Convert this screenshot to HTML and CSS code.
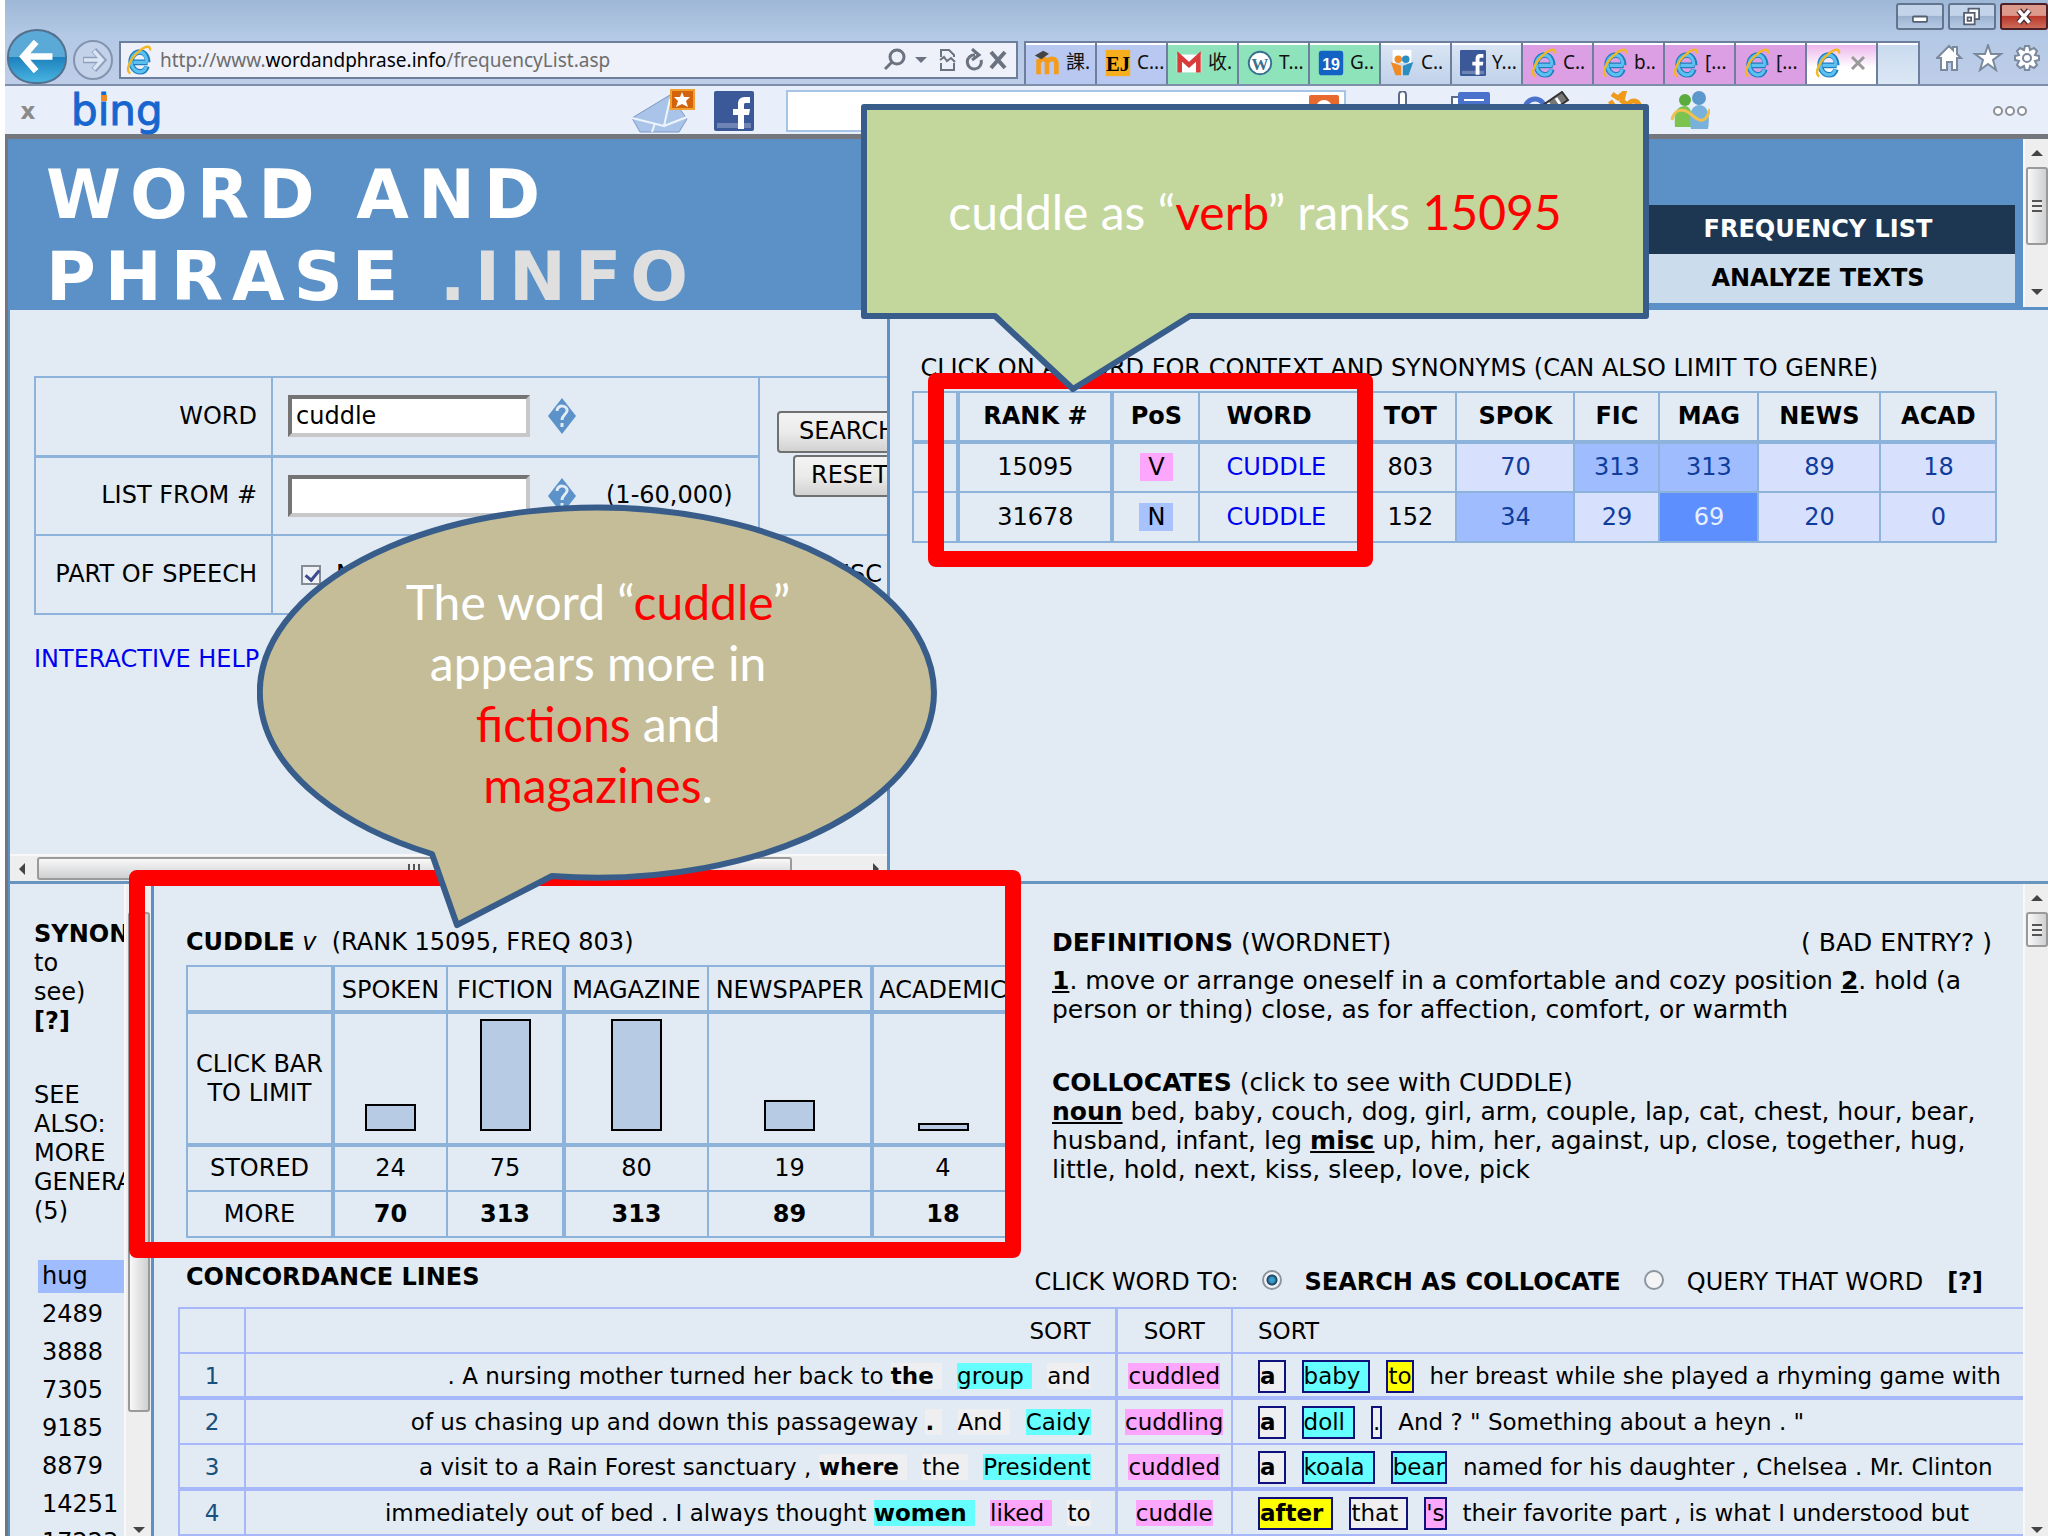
FILE: index.html
```html
<!DOCTYPE html>
<html lang="en">
<head>
    <meta charset="UTF-8">
    <meta name="viewport" content="width=device-width, initial-scale=1.0">
    <title>Word and Phrase .Info - Frequency List</title>
    <link rel="stylesheet" href="styles.css">
</head>
<body>
    <!-- shared icons -->
    <svg class="sprite" aria-hidden="true">
        <symbol id="ie" viewBox="0 0 32 38">
            <path d="M27 22H9M27 22c0-8-4-13-10-13S6 14 6 21s5 13 11 13c5 0 8-3 9-7" fill="none" stroke="#1f7fc0" stroke-width="7"/>
            <path d="M26 22H9M26 22c0-8-4-13-9-13S6 14 6 21s5 13 11 13c5 0 7-3 8-7" fill="none" stroke="#5cc0f0" stroke-width="4"/>
            <path d="M5 36C-2 32 5 17 16 8 24 1 31 0 30 7" fill="none" stroke="#f2b824" stroke-width="3"/>
        </symbol>
        <symbol id="fb" viewBox="0 0 40 40">
            <rect width="40" height="40" rx="2" fill="#3b5998"/>
            <rect x="3" y="32" width="34" height="5" fill="#6d84b4"/>
            <path d="M36 6h-5c-5 0-7 3-7 7v5h-5v6h5v14h6V24h5l1-6h-6v-4c0-2 1-2 2-2h4z" fill="#fff"/>
        </symbol>
        <symbol id="help" viewBox="0 0 28 36">
            <path d="M14 0l14 18-14 18L0 18z" fill="#5b92c9"/>
            <path d="M9 13c0-7 11-6 10 0-1 4-5 4-5 9M14 25v4" fill="none" stroke="#e2ebf4" stroke-width="3"/>
        </symbol>
    </svg>

    <div class="window">
        <div class="title-bar">
            <button type="button" class="win-btn" aria-label="Minimize">
                <svg viewBox="0 0 48 26"><rect x="16" y="13" width="16" height="6" rx="1" fill="#fff" stroke="#555f70" stroke-width="2"/></svg>
            </button>
            <button type="button" class="win-btn" aria-label="Restore">
                <svg viewBox="0 0 48 26"><g fill="#fff" stroke="#555f70" stroke-width="2"><path d="M20 4h12v12H20z"/><path d="M15 9h12v13H15z"/><path d="M19 14h4v4h-4z"/></g></svg>
            </button>
            <button type="button" class="win-btn win-close" aria-label="Close">
                <svg viewBox="0 0 48 26"><path d="M18 6l12 14M30 6L18 20" stroke="#4a3038" stroke-width="7"/><path d="M18 6l12 14M30 6L18 20" stroke="#fff" stroke-width="4"/></svg>
            </button>
        </div>

        <div class="nav-bar">
            <button type="button" class="back" aria-label="Back">
                <svg viewBox="0 0 60 56"><path d="M29 12L15 28l14 16M16 28h31" fill="none" stroke="#fff" stroke-width="7"/></svg>
            </button>
            <button type="button" class="forward" aria-label="Forward">
                <svg viewBox="0 0 40 40"><path d="M21 9l10 11-10 11M30 20H9" fill="none" stroke="#8ea0bd" stroke-width="7"/><path d="M21 10l9 10-9 10M29 20H10" fill="none" stroke="#dbe5f3" stroke-width="4"/></svg>
            </button>
            <div class="address">
                <svg class="fav"><use href="#ie"/></svg>
                <span class="url">http://www.<b>wordandphrase.info</b>/frequencyList.asp</span>
                <svg class="address-tools" viewBox="0 0 124 24" fill="none" stroke="#6b7280" stroke-width="3">
                    <circle cx="13" cy="9" r="7"/><path d="M8 14l-7 7"/>
                    <path d="M31 9h12l-6 6z" fill="#6b7280" stroke="none"/>
                    <path d="M57 9V2h8l5 5v2M57 15v7h13v-7M56 12l4-3 3 4 4-3 4 4" stroke-width="2"/>
                    <path d="M91 7a7 7 0 1 0 6 5M88 1l7 6-7 5"/>
                    <path d="M107 4l14 16M121 4l-14 16" stroke-width="4"/>
                </svg>
            </div>
            <div class="tabs">
                <a href="#" class="tab blue">
                    <svg class="fav" viewBox="0 0 26 32"><path d="M4 28V12M4 16c2-6 9-6 9 0v12M13 16c2-6 10-6 10 0v12" fill="none" stroke="#f39c1c" stroke-width="5"/><path d="M0 8l9-5 6 3-8 6z" fill="#444"/></svg>課.</a>
                <a href="#" class="tab blue">
                    <svg class="fav" viewBox="0 0 26 32"><rect y="2" width="26" height="28" fill="#f6ae1c"/><text x="13" y="25" text-anchor="middle" class="ej">EJ</text></svg>C...</a>
                <a href="#" class="tab green">
                    <svg class="fav" viewBox="0 0 26 32"><rect y="7" width="26" height="19" fill="#fff"/><path d="M3 26V9l10 9L23 9v17" fill="none" stroke="#d93a3a" stroke-width="5"/></svg>收.</a>
                <a href="#" class="tab green">
                    <svg class="fav" viewBox="0 0 26 32"><circle cx="13" cy="16" r="12" fill="#fff" stroke="#38718f" stroke-width="2"/><text x="13" y="23" text-anchor="middle" class="wp">W</text></svg>T...</a>
                <a href="#" class="tab green">
                    <svg class="fav" viewBox="0 0 26 32"><rect y="3" width="26" height="26" rx="3" fill="#1263c4"/><text x="13" y="23" text-anchor="middle" class="cal">19</text></svg>G..</a>
                <a href="#" class="tab plain">
                    <svg class="fav" viewBox="0 0 26 32"><path d="M3 2h20v14H3z" fill="#fff"/><circle cx="9" cy="12" r="4" fill="#f08a24"/><circle cx="17" cy="12" r="4" fill="#2a8fc0"/><path d="M1 15l11 4v10H6z" fill="#f08a24"/><path d="M25 15l-11 4v10h6z" fill="#2a8fc0"/></svg>C..</a>
                <a href="#" class="tab plain"><svg class="fav"><use href="#fb"/></svg>Y...</a>
                <a href="#" class="tab pink"><svg class="fav"><use href="#ie"/></svg>C..</a>
                <a href="#" class="tab pink"><svg class="fav"><use href="#ie"/></svg>b..</a>
                <a href="#" class="tab pink"><svg class="fav"><use href="#ie"/></svg>[...</a>
                <a href="#" class="tab pink"><svg class="fav"><use href="#ie"/></svg>[...</a>
                <a href="#" class="tab active"><svg class="fav"><use href="#ie"/></svg><svg class="tab-x" viewBox="0 0 14 14"><path d="M1 1l12 12M13 1L1 13" stroke="#9a9a9a" stroke-width="3"/></svg></a>
                <button type="button" class="tab new-tab" aria-label="New tab"></button>
            </div>
            <svg class="nav-tools" viewBox="0 0 106 28" fill="#fff" stroke="#7b899d" stroke-width="2">
                <path d="M1 14L13 2l4 4V3h4v7l4 4h-4v12h-5v-8h-5v8H5V14z"/>
                <path d="M52 1l3 9h10l-8 6 3 10-8-6-8 6 3-10-8-6h10z"/>
                <path d="M89 2h4l1 4 4-2 3 3-2 4 4 1v4l-4 1 2 4-3 3-4-2-1 4h-4l-1-4-4 2-3-3 2-4-4-1v-4l4-1-2-4 3-3 4 2z"/><circle cx="91" cy="14" r="4"/>
            </svg>
        </div>

        <div class="bing-bar">
            <button type="button" class="bar-close">x</button>
            <span class="bing">b<span class="dot-i">i</span>ng</span>
            <svg class="mail" viewBox="0 0 64 44">
                <path d="M0 29L38 6l17 24-8 13H8z" fill="#a9c4e8" stroke="#7d97c4"/><path d="M0 29l32 8 6-27M32 37l23-9M20 43l3-9" fill="none" stroke="#eef4fb" stroke-width="2"/>
                <rect x="39" y="1" width="23" height="19" fill="#d4640c" stroke="#f0a030" stroke-width="2"/><path d="M50 3l2 5h6l-4 4 2 6-6-3-6 3 2-6-4-4h6z" fill="#fff"/>
            </svg>
            <svg class="fb-big"><use href="#fb"/></svg>
            <div class="search-wrap">
                <input type="text" class="bing-search" aria-label="Search the web">
                <svg viewBox="0 0 30 34"><rect width="30" height="34" rx="2" fill="#e8692e"/><circle cx="15" cy="13" r="6" fill="none" stroke="#fff" stroke-width="4"/></svg>
            </div>
            <svg class="bar-icons" viewBox="0 0 340 40">
                <path d="M29 30V4c0-5 7-5 7 0v26" fill="#fff" stroke="#5a6a88" stroke-width="2"/>
                <rect x="82" y="6" width="20" height="20" fill="#fff" stroke="#5a6a88" stroke-width="2"/><rect x="88" y="1" width="32" height="24" rx="2" fill="#4a72cc"/><path d="M94 9h20" stroke="#fff" stroke-width="2"/>
                <circle cx="165" cy="18" r="10" fill="none" stroke="#4a72cc" stroke-width="5"/><path d="M170 16L192 1l6 8-22 15z" fill="#777" stroke="#333" stroke-width="2"/><path d="M178 12l4 6M186 7l4 6" stroke="#fff" stroke-width="3"/>
                <path d="M242 3l6 4 6-5-2 8 6 4M258 14a6 6 0 1 1 5 8M240 10l6 8" fill="none" stroke="#f09a1c" stroke-width="5"/>
                <circle cx="315" cy="9" r="6" fill="#5cab3e"/><path d="M305 36c-1-12 0-20 9-21 8 0 8 8 8 21z" fill="#7cc34f"/>
                <circle cx="329" cy="7" r="7" fill="#5c98cc"/><path d="M321 38c-2-14-1-23 8-24 10 0 11 12 9 24z" fill="#78b2dc"/>
                <path d="M302 29c2-12 12-12 20-5s14 9 18-6" fill="none" stroke="#f0c050" stroke-width="3"/>
            </svg>
            <svg class="dots" viewBox="0 0 36 12" fill="#fff" stroke="#8a8f98" stroke-width="2"><circle cx="6" cy="6" r="4"/><circle cx="18" cy="6" r="4"/><circle cx="30" cy="6" r="4"/></svg>
        </div>

        <div class="page">
            <header class="site-header">
                <h1>WORD AND<br>PHRASE <span>.INFO</span></h1>
                <nav class="site-nav">
                    <a href="#" class="current">FREQUENCY LIST</a>
                    <a href="#">ANALYZE TEXTS</a>
                </nav>
                <div class="scroll-v">
                    <span class="arrow up"></span>
                    <span class="thumb header-thumb"><i class="grip"></i></span>
                    <span class="arrow down"></span>
                </div>
            </header>

            <div class="top-frames">
                <section class="search-frame">
                    <form>
                        <table class="form-table">
                            <colgroup><col class="c-label"><col class="c-field"><col class="c-btns"></colgroup>
                            <tr>
                                <td class="label"><label for="word">WORD</label></td>
                                <td class="field"><input type="text" id="word" value="cuddle"><svg class="help"><use href="#help"/></svg></td>
                                <td rowspan="2" class="buttons"><button type="submit">SEARCH</button><br><button type="reset">RESET</button></td>
                            </tr>
                            <tr class="first-alt">
                                <td class="label"><label for="from">LIST FROM #</label></td>
                                <td class="field"><input type="text" id="from"><svg class="help"><use href="#help"/></svg><span class="hint">(1-60,000)</span></td>
                            </tr>
                            <tr>
                                <td class="label">PART OF SPEECH</td>
                                <td colspan="2"><div class="pos-row"><span><input type="checkbox" id="noun" checked><label for="noun">NOUN</label></span><span><input type="checkbox" id="misc" checked><label for="misc">MISC</label></span></div></td>
                            </tr>
                        </table>
                    </form>
                    <a href="#" class="help-link">INTERACTIVE HELP</a>
                    <div class="scroll-h">
                        <span class="arrow left"></span>
                        <span class="thumb-h"><i class="grip-h"></i></span>
                        <span class="arrow right"></span>
                    </div>
                </section>

                <section class="result-frame">
                    <p class="caption">CLICK ON A WORD FOR CONTEXT AND SYNONYMS (CAN ALSO LIMIT TO GENRE)</p>
                    <table class="results">
                        <colgroup><col class="r0"><col class="r1"><col class="r2"><col class="r3"><col class="r4"><col class="r5"><col class="r6"><col class="r7"><col class="r8"><col class="r9"></colgroup>
                        <tr><th></th><th class="bl">RANK #</th><th class="bl">PoS</th><th>WORD</th><th>TOT</th><th>SPOK</th><th>FIC</th><th>MAG</th><th>NEWS</th><th>ACAD</th></tr>
                        <tr class="bt"><td></td><td class="bl">15095</td><td class="bl"><span class="chip pink-bg">V</span></td><td><a href="#">CUDDLE</a></td><td>803</td><td class="low">70</td><td class="mid">313</td><td class="mid">313</td><td class="low">89</td><td class="low">18</td></tr>
                        <tr><td></td><td class="bl">31678</td><td class="bl"><span class="chip blue-bg">N</span></td><td><a href="#">CUDDLE</a></td><td>152</td><td class="mid">34</td><td class="low">29</td><td class="high">69</td><td class="low">20</td><td class="low">0</td></tr>
                    </table>
                </section>
            </div>

            <div class="bottom-frames">
                <aside class="synonyms">
                    <div class="syn-text">
                        <p><b>SYNONYMS</b><br>to<br>see)<br><b>[?]</b></p>
                        <p class="see">SEE<br>ALSO:<br>MORE<br>GENERAL<br>(5)</p>
                        <ul>
                            <li class="on">hug</li>
                            <li>2489</li>
                            <li>3888</li>
                            <li>7305</li>
                            <li>9185</li>
                            <li>8879</li>
                            <li>14251</li>
                            <li>17223</li>
                        </ul>
                    </div>
                    <div class="scroll-v">
                        <span class="arrow hidden"></span>
                        <span class="thumb syn-thumb"></span>
                        <span class="arrow down"></span>
                    </div>
                </aside>

                <main class="entry">
                    <div class="entry-body">
                        <div class="entry-top">
                            <section class="chart">
                                <p><b>CUDDLE</b> <i>v</i>&nbsp; (RANK 15095, FREQ 803)</p>
                                <table class="genres">
                                    <colgroup><col class="g0"><col class="g1"><col class="g2"><col class="g3"><col class="g4"><col class="g5"></colgroup>
                                    <tr><td></td><td class="bl">SPOKEN</td><td>FICTION</td><td class="bl">MAGAZINE</td><td>NEWSPAPER</td><td class="bl">ACADEMIC</td></tr>
                                    <tr class="bars bt">
                                        <td class="bar-label">CLICK BAR<br>TO LIMIT</td>
                                        <td class="bl"><div class="bar" style="height: 27px"></div></td>
                                        <td><div class="bar" style="height: 112px"></div></td>
                                        <td class="bl"><div class="bar" style="height: 112px"></div></td>
                                        <td><div class="bar" style="height: 31px"></div></td>
                                        <td class="bl"><div class="bar" style="height: 8px"></div></td>
                                    </tr>
                                    <tr class="bt"><td>STORED</td><td class="bl">24</td><td>75</td><td class="bl">80</td><td>19</td><td class="bl">4</td></tr>
                                    <tr class="more"><td>MORE</td><td class="bl">70</td><td>313</td><td class="bl">313</td><td>89</td><td class="bl">18</td></tr>
                                </table>
                            </section>
                            <section class="defs">
                                <div class="defs-head"><span><b>DEFINITIONS</b> (WORDNET)</span><span>( BAD ENTRY? )</span></div>
                                <p><b><u>1</u></b>. move or arrange oneself in a comfortable and cozy position <b><u>2</u></b>. hold (a person or thing) close, as for affection, comfort, or warmth</p>
                                <p class="colls"><b>COLLOCATES</b> (click to see with CUDDLE)<br><b><u>noun</u></b> bed, baby, couch, dog, girl, arm, couple, lap, cat, chest, hour, bear, husband, infant, leg <b><u>misc</u></b> up, him, her, against, up, close, together, hug, little, hold, next, kiss, sleep, love, pick</p>
                            </section>
                        </div>

                        <div class="conc-head">
                            <h2>CONCORDANCE LINES</h2>
                            <div class="conc-opts">
                                <span>CLICK WORD TO:</span>
                                <input type="radio" name="mode" id="mode-coll" checked><label for="mode-coll"><b>SEARCH AS COLLOCATE</b></label>
                                <input type="radio" name="mode" id="mode-query"><label for="mode-query">QUERY THAT WORD</label>
                                <b class="q">[?]</b>
                            </div>
                        </div>
                        <table class="conc">
                            <colgroup><col class="k0"><col class="k1"><col class="k2"><col></colgroup>
                            <tr><td></td><td class="before">SORT</td><td class="bl">SORT</td><td class="after">SORT</td></tr>
                            <tr><td class="num">1</td><td class="before">. A nursing mother turned her back to <span class="w pale"><b>the</b></span> <span class="w cyan">group</span> <span class="w end pale">and</span></td><td class="bl"><span class="node">cuddled</span></td><td class="after"><span class="box pale"><b>a</b></span><span class="box cyan">baby</span><span class="box tight yellow">to</span>her breast while she played a rhyming game with</td></tr>
                            <tr class="bt"><td class="num">2</td><td class="before">of us chasing up and down this passageway <span class="w pale"><b>.</b></span> <span class="w pale">And</span> <span class="w end cyan">Caidy</span></td><td class="bl"><span class="node">cuddling</span></td><td class="after"><span class="box pale"><b>a</b></span><span class="box cyan">doll</span><span class="box tight pale">.</span>And ? " Something about a heyn . "</td></tr>
                            <tr><td class="num">3</td><td class="before">a visit to a Rain Forest sanctuary , <span class="w pale"><b>where</b></span> <span class="w pale">the</span> <span class="w end cyan">President</span></td><td class="bl"><span class="node">cuddled</span></td><td class="after"><span class="box pale"><b>a</b></span><span class="box cyan">koala</span><span class="box tight cyan">bear</span>named for his daughter , Chelsea . Mr. Clinton</td></tr>
                            <tr class="bt"><td class="num">4</td><td class="before">immediately out of bed . I always thought <span class="w cyan"><b>women</b></span> <span class="w pink-bg">liked</span> <span class="w end pale">to</span></td><td class="bl"><span class="node">cuddle</span></td><td class="after"><span class="box yellow"><b>after</b></span><span class="box pale">that</span><span class="box tight pink-bg">'s</span>their favorite part , is what I understood but</td></tr>
                        </table>
                    </div>
                    <div class="scroll-v">
                        <span class="arrow up"></span>
                        <span class="thumb entry-thumb"><i class="grip"></i></span>
                        <span class="arrow down"></span>
                    </div>
                </main>
            </div>
        </div>
    </div>

    <!-- annotations on top of the browser window -->
    <div class="mark mark-results"></div>
    <div class="mark mark-chart"></div>

    <div class="callout callout-rank">
        <svg viewBox="0 0 790 292"><path d="M4 5h782v209H330L213 287 135 214H4z" fill="#c3d69b" stroke="#385d8a" stroke-width="6" stroke-linejoin="round"/></svg>
        <p>cuddle as “<em>verb</em>” ranks <em>15095</em></p>
    </div>

    <div class="callout callout-genre">
        <svg viewBox="0 0 682 425"><path d="M175 350A337 185 0 1 1 295 372L200 421z" fill="#c4bd97" stroke="#385d8a" stroke-width="6" stroke-linejoin="round"/></svg>
        <p>The word “<em>cuddle</em>”<br>appears more in<br><em>fictions</em> and<br><em>magazines</em>.</p>
    </div>
</body>
</html>
```

FILE: styles.css
```css
* {
    box-sizing: border-box;
}

body {
    margin: 0;
    position: relative;
    height: 100vh;
    overflow: hidden;
    background: #fff;
    color: #000;
    font-family: "DejaVu Sans", Verdana, sans-serif;
    font-size: 24px;
    line-height: 29px;
}

p, h1, h2, ul {
    margin: 0;
    padding: 0;
}

a {
    color: #0000f0;
    text-decoration: none;
}

button, input {
    font: inherit;
    margin: 0;
}

table {
    border-collapse: collapse;
    table-layout: fixed;
}

td, th {
    padding: 0;
    text-align: center;
}

.sprite {
    position: absolute;
    width: 0;
    height: 0;
}

.window {
    height: 100%;
    margin-left: 5px;
    display: flex;
    flex-direction: column;
    background: #bacde8;
}

/* browser chrome */
.title-bar {
    height: 36px;
    padding-top: 3px;
    display: flex;
    justify-content: flex-end;
    gap: 4px;
    background: linear-gradient(#9fb7d7, #b3c9e5);
}

.win-btn {
    width: 48px;
    height: 27px;
    padding: 0;
    border: 2px solid #63748f;
    border-radius: 3px;
    background: linear-gradient(#c3d3e9 45%, #9cb3d0 50%, #b5c9e3);
}

.win-btn svg {
    display: block;
    width: 100%;
    height: 100%;
}

.win-close {
    border-color: #4d2028;
    background: linear-gradient(#dc9a8c 45%, #b9392b 50%, #cd6a58);
}

.nav-bar {
    height: 50px;
    display: flex;
    align-items: flex-end;
    border-bottom: 2px solid #7d8ea8;
    background: linear-gradient(#b3c9e5, #bfcde9);
}

.back {
    width: 60px;
    height: 55px;
    margin-left: 2px;
    padding: 0;
    border: 2px solid #54708f;
    border-radius: 50% 50% 45% 45%;
    background: linear-gradient(#5ba9d6 50%, #1d81bd 52%, #49b4e2);
}

.forward {
    width: 40px;
    height: 40px;
    margin: 0 6px 4px;
    padding: 0;
    border: 2px solid #8394b0;
    border-radius: 50%;
    background: #c3d2e8;
}

.back svg, .forward svg {
    display: block;
    width: 100%;
    height: 100%;
}

.address {
    flex: 1;
    min-width: 0;
    height: 38px;
    margin-bottom: 5px;
    padding: 0 8px 0 5px;
    display: flex;
    align-items: center;
    gap: 8px;
    border: 2px solid #6d7f9c;
    background: #eef1fa;
}

.fav {
    flex: none;
    width: 26px;
    height: 30px;
}

.url {
    flex: 1;
    color: #6d6d6d;
    font-family: "Noto Sans", sans-serif;
    font-size: 19px;
    white-space: nowrap;
}

.url b {
    color: #000;
    font-weight: normal;
}

.address-tools {
    width: 124px;
    height: 24px;
}

.tabs {
    display: flex;
    margin-left: 6px;
    border-left: 2px solid #6d7f9c;
}

.tab {
    width: 71px;
    height: 43px;
    padding: 0 0 2px 8px;
    display: flex;
    align-items: center;
    gap: 6px;
    overflow: hidden;
    border: 0 solid #6d7f9c;
    border-width: 2px 2px 0 0;
    box-shadow: inset 0 2px #fff;
    color: #111;
    font-family: "Noto Sans", "Noto Sans CJK TC", sans-serif;
    font-size: 19px;
    white-space: nowrap;
}

.tab-x {
    width: 14px;
    height: 14px;
    margin-left: 4px;
}

.blue {
    background: #b9c8f1;
}

.green {
    background: #8fe3bb;
}

.plain {
    background: linear-gradient(#dbe6f4, #c0d1ea);
}

.pink {
    background: #dd9fe3;
}

.active {
    background: linear-gradient(#ebb0ea, #fff 60%);
}

.new-tab {
    width: 42px;
    background: linear-gradient(#c9daee, #dce7f5);
}

.ej {
    font: bold 22px "Liberation Serif", serif;
}

.wp {
    font: bold 18px "Liberation Serif", serif;
    fill: #38718f;
}

.cal {
    font: bold 17px "Liberation Sans", sans-serif;
    fill: #fff;
}

.nav-tools {
    width: 106px;
    height: 28px;
    margin: 0 6px 12px 16px;
}

.bing-bar {
    height: 53px;
    padding: 2px 20px 0 12px;
    display: flex;
    align-items: center;
    border-bottom: 5px solid #74777d;
    background: #e8effa;
}

.bar-close {
    width: 22px;
    padding: 0;
    border: 0;
    background: none;
    color: #8a8a8a;
    font-size: 23px;
    font-weight: bold;
}

.bing {
    flex: none;
    width: 593px;
    padding-left: 32px;
    color: #1766cf;
    font-size: 42px;
    line-height: 42px;
    -webkit-text-stroke: 1px #1766cf;
}

.dot-i {
    position: relative;
}

.dot-i::after {
    content: "";
    position: absolute;
    left: 3px;
    top: 9px;
    width: 6px;
    height: 6px;
    background: #f08a24;
}

.mail {
    flex: none;
    width: 64px;
    height: 44px;
}

.fb-big {
    flex: none;
    width: 40px;
    height: 40px;
    margin: 0 32px 0 18px;
}

.search-wrap {
    position: relative;
    width: 560px;
    height: 42px;
}

.bing-search {
    width: 100%;
    height: 100%;
    border: 2px solid #a6c4e6;
    background: #fff;
}

.search-wrap svg {
    position: absolute;
    top: 5px;
    right: 6px;
    width: 32px;
    height: 34px;
}

.bar-icons {
    width: 340px;
    height: 40px;
    margin-left: 24px;
}

.dots {
    width: 36px;
    height: 12px;
    margin-left: auto;
}

/* page */
.page {
    flex: 1;
    min-height: 0;
    display: flex;
    flex-direction: column;
    border-left: 3px solid #74777d;
    background: #e2ebf4;
}

.site-header {
    display: flex;
    align-items: stretch;
    border-bottom: 3px solid #5b91c7;
    background: #5b91c7;
}

h1 {
    flex: 1;
    margin-bottom: -11px;
    padding: 15px 0 0 38px;
    color: #fff;
    font-size: 68px;
    line-height: 82px;
    letter-spacing: 9px;
}

h1 span {
    color: #dfdfdf;
}

.site-nav {
    width: 394px;
    margin: 66px 8px 4px 0;
    display: flex;
    flex-direction: column;
}

.site-nav a {
    flex: 1;
    display: flex;
    align-items: center;
    justify-content: center;
    background: #cbddec;
    color: #000;
    font-weight: bold;
}

.site-nav .current {
    background: #1d3753;
    color: #fff;
}

/* scrollbars */
.scroll-v {
    flex: none;
    width: 25px;
    display: flex;
    flex-direction: column;
    align-items: center;
    border-left: 2px solid #f8f8f8;
    background: #eeeeee;
}

.arrow {
    width: 0;
    height: 0;
    margin: 11px 0;
    border: 6px solid transparent;
}

.up {
    border-top-width: 0;
    border-bottom-color: #444;
}

.down {
    margin-top: auto;
    margin-bottom: 3px;
    border-bottom-width: 0;
    border-top-color: #444;
}

.site-header .down {
    margin-bottom: 12px;
}

.left {
    margin: 0 12px 0 9px;
    border-left-width: 0;
    border-right-color: #444;
}

.right {
    margin: 0 8px 0 auto;
    border-right-width: 0;
    border-left-color: #444;
}

.hidden {
    height: 6px;
    border-width: 3px;
}

.thumb {
    width: 22px;
    display: flex;
    align-items: center;
    justify-content: center;
    border: 2px solid #9a9a9a;
    border-radius: 3px;
    background: linear-gradient(90deg, #f8f8f8, #cfd0d2);
}

.header-thumb {
    height: 78px;
}

.entry-thumb {
    height: 35px;
}

.syn-thumb {
    height: 500px;
}

.grip {
    width: 10px;
    height: 12px;
    background: repeating-linear-gradient(#555 0 2px, #eee 2px 5px);
}

.scroll-h {
    height: 27px;
    margin-top: auto;
    display: flex;
    align-items: center;
    border-top: 2px solid #f8f8f8;
    background: #eeeeee;
}

.thumb-h {
    width: 86%;
    height: 23px;
    display: flex;
    align-items: center;
    justify-content: center;
    border: 2px solid #9a9a9a;
    border-radius: 3px;
    background: linear-gradient(#f8f8f8, #cfd0d2);
}

.grip-h {
    width: 12px;
    height: 10px;
    background: repeating-linear-gradient(90deg, #555 0 2px, #eee 2px 5px);
}

/* top frames */
.top-frames {
    height: 574px;
    display: grid;
    grid-template-columns: 432fr 568fr;
    border-left: 2px solid #5b91c7;
    border-bottom: 3px solid #6795bf;
}

.search-frame {
    min-width: 0;
    padding-top: 66px;
    display: flex;
    flex-direction: column;
    overflow: hidden;
    border-right: 3px solid #5b91c7;
}

.form-table {
    width: 1000px;
    margin-left: 24px;
    border: 2px solid #8db3da;
}

.form-table tr {
    height: 79px;
}

.form-table td {
    border: 2px solid #8db3da;
}

.c-label {
    width: 237px;
}

.c-field {
    width: 487px;
}

.form-table .label {
    padding-right: 14px;
    text-align: right;
    white-space: nowrap;
}

.form-table .first-alt td {
    border-top-width: 3px;
}

.form-table .field {
    padding-left: 15px;
    text-align: left;
    vertical-align: middle;
}

.field input {
    width: 242px;
    height: 42px;
    padding: 0 4px;
    border: 4px inset #c8c8c8;
    background: #fff;
    vertical-align: middle;
}

.help {
    width: 28px;
    height: 36px;
    margin: 0 30px 0 18px;
    vertical-align: middle;
}

.form-table .buttons {
    padding: 0 0 6px 17px;
    text-align: left;
    line-height: 44px;
}

.buttons button {
    height: 42px;
    padding: 0 20px;
    border: 2px solid #707070;
    border-radius: 4px;
    background: linear-gradient(#f3f3f3, #ebebeb 50%, #d2d2d2);
    line-height: 29px;
}

.buttons button[type="reset"] {
    margin-left: 16px;
    padding: 0 16px;
}

.pos-row {
    width: 609px;
    padding-left: 28px;
    display: flex;
    justify-content: space-between;
}

.pos-row span {
    display: flex;
    align-items: center;
}

.pos-row input {
    appearance: none;
    width: 20px;
    height: 20px;
    margin-right: 15px;
    border: 2px solid #868c96;
    background: #eef1f6;
}

.pos-row input:checked::after {
    content: "";
    display: block;
    width: 6px;
    height: 11px;
    margin: 0 0 0 5px;
    border: 0 solid #3c4c8c;
    border-width: 0 3px 3px 0;
    transform: rotate(40deg);
}

.help-link {
    margin: 30px 0 0 24px;
}

.result-frame {
    padding: 44px 0 0 22px;
}

.caption {
    padding-left: 8px;
    white-space: nowrap;
}

.results {
    width: 1083px;
    margin-top: 8px;
    border: 2px solid #8db3da;
}

.results tr {
    height: 50px;
}

.results td, .results th, .genres td {
    border: 2px solid #8db3da;
}

.results .bl, .genres .bl {
    border-left-width: 4px;
}

.results .bt td, .genres .bt td {
    border-top-width: 4px;
}

.r0 { width: 45px; }
.r1 { width: 154px; }
.r2 { width: 87px; }
.r3 { width: 165px; }
.r4 { width: 92px; }
.r5 { width: 118px; }
.r6 { width: 85px; }
.r7 { width: 99px; }
.r8 { width: 122px; }
.r9 { width: 116px; }

.results td:nth-child(4), .results th:nth-child(4) {
    padding-left: 26px;
    text-align: left;
}

.low {
    background: #d7e1fd;
    color: #103c9c;
}

.mid {
    background: #9ebcfe;
    color: #103c9c;
}

.high {
    background: #5d90fe;
    color: #e8f0ff;
}

.chip {
    padding: 0 8px;
}

/* bottom frames */
.bottom-frames {
    flex: 1;
    min-height: 0;
    display: flex;
    border-left: 2px solid #5b91c7;
}

.synonyms {
    width: 144px;
    display: flex;
    overflow: hidden;
    border-right: 3px solid #5b91c7;
}

.synonyms .scroll-v {
    width: 27px;
}

.syn-text {
    flex: 1;
    min-width: 0;
    height: 653px;
    padding: 36px 0 0 24px;
    overflow: hidden;
}

.see {
    margin-top: 45px;
}

.synonyms ul {
    margin: 34px 0 0 4px;
    list-style: none;
}

.synonyms li {
    height: 33px;
    margin-bottom: 5px;
    padding-left: 4px;
    line-height: 33px;
}

.synonyms .on {
    background: #9ebcfe;
}

.entry {
    flex: 1;
    min-width: 0;
    display: flex;
}

.entry-body {
    flex: 1;
    min-width: 0;
    padding-top: 44px;
    overflow: hidden;
}

.entry-top {
    display: flex;
    padding: 0 31px 0 32px;
}

.chart {
    flex: none;
    width: 866px;
}

.genres {
    width: 826px;
    margin-top: 8px;
    border: 2px solid #8db3da;
}

.genres tr {
    height: 46px;
}

.genres tr:first-child td {
    padding-top: 3px;
}

.genres .bars {
    height: 133px;
}

.genres .bars td {
    padding-bottom: 12px;
    vertical-align: bottom;
}

.genres .bars .bar-label {
    padding: 0;
    vertical-align: middle;
}

.g0 { width: 146px; }
.g1 { width: 114px; }
.g2 { width: 117px; }
.g3 { width: 144px; }
.g4 { width: 164px; }
.g5 { width: 141px; }

.bar {
    width: 51px;
    margin: 0 auto;
    border: 2px solid #000;
    background: #b7cce4;
}

.more td:not(:first-child) {
    font-weight: bold;
}

.defs {
    flex: 1;
    min-width: 0;
    font-size: 25px;
}

.defs-head {
    display: flex;
    justify-content: space-between;
    margin-bottom: 9px;
}

.colls {
    margin-top: 44px;
}

.conc-head {
    display: flex;
    justify-content: space-between;
    align-items: flex-start;
    margin-top: 25px;
    padding: 0 40px 0 32px;
}

h2 {
    font-size: 24px;
    line-height: 29px;
}

.conc-opts {
    display: flex;
    align-items: center;
    padding-top: 5px;
}

.conc-opts input {
    appearance: none;
    width: 20px;
    height: 20px;
    margin: 0 23px 6px;
    border: 2px solid #8e949c;
    border-radius: 50%;
    background: #f2f4f6;
}

.conc-opts input:checked {
    background: radial-gradient(circle, #3aa0d0 0 2px, #17405f 5px, #f2f4f6 6px);
}

.q {
    margin-left: 24px;
}

.conc {
    width: calc(100% + 16px);
    margin: 10px 0 0 24px;
    border: 2px solid #a6b8fa;
    font-size: 23px;
}

.conc tr {
    height: 45px;
}

.conc .bt {
    height: 46px;
}

.conc td {
    padding-top: 2px;
    border: 2px solid #a6b8fa;
    white-space: nowrap;
}

.conc .bl {
    border-left-width: 3px;
}

.conc .bt td {
    border-top-width: 4px;
}

.k0 { width: 66px; }
.k1 { width: 871px; }
.k2 { width: 116px; }

.conc .num {
    color: #17517c;
}

.conc .before {
    padding-right: 24px;
    text-align: right;
}

.conc .after {
    padding-left: 25px;
    text-align: left;
}

.w {
    padding-right: 8px;
    margin-right: 8px;
}

.w.end {
    padding-right: 0;
    margin-right: 0;
}

.node {
    background: #fda6fd;
}

.box {
    display: inline-block;
    margin-right: 16px;
    padding: 0 8px 0 0;
    border: 2px solid #10107c;
}

.box.tight {
    padding-right: 0;
}

.pale {
    background: #efeff1;
}

.cyan {
    background: #66ffff;
}

.yellow {
    background: #ffff00;
}

.pink-bg {
    background: #fda6fd;
}

.blue-bg {
    background: #a8c2fe;
}

/* annotations */
.mark {
    position: absolute;
    border: 16px solid #ff0000;
    border-radius: 8px;
}

.mark-results {
    left: 928px;
    top: 373px;
    width: 445px;
    height: 194px;
}

.mark-chart {
    left: 129px;
    top: 870px;
    width: 892px;
    height: 388px;
}

.callout {
    position: absolute;
    color: #fff;
    font-family: Lato, sans-serif;
    font-size: 48px;
    line-height: 61px;
    text-align: center;
}

.callout svg {
    display: block;
    width: 100%;
}

.callout p {
    position: absolute;
    left: 0;
    right: 0;
    white-space: nowrap;
}

.callout em {
    color: #ff0000;
    font-style: normal;
}

.callout-rank {
    left: 860px;
    top: 102px;
    width: 790px;
}

.callout-rank p {
    top: 79px;
}

.callout-genre {
    left: 257px;
    top: 504px;
    width: 682px;
}

.callout-genre p {
    top: 67px;
}
```
